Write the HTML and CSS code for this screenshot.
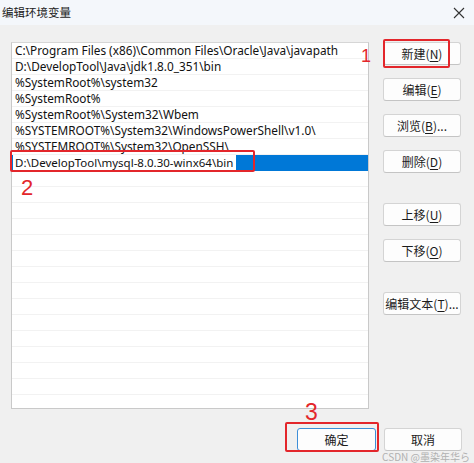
FILE: index.html
```html
<!DOCTYPE html>
<html>
<head>
<meta charset="utf-8">
<link rel="stylesheet" href="styles.css">
</head>
<body>
<div class="dialog">
  <div class="titlebar">
    <span class="title">编辑环境变量</span>
    <svg class="close" width="12" height="12" viewBox="0 0 12 12"><path d="M1 1L11 11M11 1L1 11" stroke="#333" stroke-width="1.1" fill="none"/></svg>
  </div>
  <div class="main">
    <div class="list">
      <div class="row">C:\Program Files (x86)\Common Files\Oracle\Java\javapath</div>
      <div class="row">D:\DevelopTool\Java\jdk1.8.0_351\bin</div>
      <div class="row">%SystemRoot%\system32</div>
      <div class="row">%SystemRoot%</div>
      <div class="row">%SystemRoot%\System32\Wbem</div>
      <div class="row">%SYSTEMROOT%\System32\WindowsPowerShell\v1.0\</div>
      <div class="row">%SYSTEMROOT%\System32\OpenSSH\</div>
      <div class="row selected"><span class="edit">D:\DevelopTool\mysql-8.0.30-winx64\bin</span></div>
      <div class="row"></div><div class="row"></div><div class="row"></div><div class="row"></div>
      <div class="row"></div><div class="row"></div><div class="row"></div><div class="row"></div>
      <div class="row"></div><div class="row"></div><div class="row"></div><div class="row"></div>
      <div class="row"></div><div class="row"></div><div class="row"></div>
    </div>
    <div class="side">
      <div class="group">
        <button class="btn">新建(<u>N</u>)</button>
        <button class="btn">编辑(<u>E</u>)</button>
        <button class="btn">浏览(<u>B</u>)...</button>
        <button class="btn">删除(<u>D</u>)</button>
      </div>
      <div class="group">
        <button class="btn">上移(<u>U</u>)</button>
        <button class="btn">下移(<u>O</u>)</button>
      </div>
      <div class="group">
        <button class="btn">编辑文本(<u>T</u>)...</button>
      </div>
    </div>
  </div>
  <div class="footer">
    <button class="btn default">确定</button>
    <button class="btn">取消</button>
  </div>
  <div class="mark box1"></div>
  <div class="mark box2"></div>
  <div class="mark box3"></div>
  <span class="num n1">1</span>
  <span class="num n2">2</span>
  <span class="num n3">3</span>
  <span class="watermark">CSDN @墨染年华ら</span>
</div>
</body>
</html>
```
FILE: styles.css
```css
html, body {
  margin: 0;
  padding: 0;
}
body {
  width: 474px;
  height: 463px;
  overflow: hidden;
  font-family: "Liberation Sans", "Noto Sans CJK SC", sans-serif;
}
.dialog {
  position: relative;
  width: 474px;
  height: 463px;
  background: #f0f0f0;
  display: flex;
  flex-direction: column;
}
.titlebar {
  height: 25px;
  background: #f4f7fb;
  display: flex;
  align-items: center;
  justify-content: space-between;
  padding: 0 9px 0 2px;
  box-sizing: border-box;
}
.title {
  font-family: "Noto Sans CJK SC", sans-serif;
  font-size: 11.5px;
  color: #222;
  margin-top: -1px;
}
.main {
  display: flex;
  padding: 17px 0 0 11px;
  gap: 14px;
}
.list {
  width: 358px;
  height: 367px;
  box-sizing: border-box;
  background: #fff;
  border: 1px solid #c9c9c9;
  border-top-color: #d6d6d6;
  overflow: hidden;
  display: flex;
  flex-direction: column;
}
.row {
  flex: none;
  height: 16px;
  box-sizing: border-box;
  border-bottom: 1px solid #f2f2f2;
  font-family: "Noto Sans", sans-serif;
  font-size: 11.8px;
  line-height: 15px;
  padding-left: 3px;
  color: #111;
  white-space: nowrap;
}
.row.selected {
  background: #0078d7;
  padding-left: 1px;
  border-bottom-color: #0078d7;
}
.edit {
  display: inline-block;
  background: #fff;
  height: 15px;
  padding: 0 3px 0 2px;
  font-size: 11.5px;
}
.side {
  width: 78px;
  display: flex;
  flex-direction: column;
  gap: 30px;
}
.group {
  display: flex;
  flex-direction: column;
  gap: 13px;
}
.btn {
  width: 78px;
  height: 23px;
  box-sizing: border-box;
  border: 1px solid #d4d4d4;
  border-bottom-color: #c4c4c4;
  border-radius: 3px;
  background: #fdfdfd;
  font-family: "Noto Sans CJK SC", sans-serif;
  font-size: 12px;
  color: #1b1b1b;
  padding: 0;
  line-height: 20px;
}
.btn u {
  text-decoration-thickness: 1px;
  text-underline-offset: 2px;
}
.footer {
  display: flex;
  justify-content: flex-end;
  gap: 8px;
  padding: 0 12px 0 0;
  margin-top: 19px;
}
.btn.default {
  border: 1px solid #3d8ed8;
  width: 79px;
}
.mark {
  position: absolute;
  border: 2px solid #e3262b;
  border-radius: 2px;
  box-sizing: border-box;
}
.box1 { left: 383px; top: 39px; width: 67px; height: 29px; }
.box2 { left: 10px; top: 150px; width: 245px; height: 22px; }
.box3 { left: 285px; top: 422px; width: 94px; height: 30px; }
.num {
  position: absolute;
  color: #e3262b;
  font-family: "Liberation Sans", sans-serif;
  line-height: 1;
}
.n1 { left: 361px; top: 47px; font-size: 18px; }
.n2 { left: 21px; top: 177px; font-size: 22px; }
.n3 { left: 305px; top: 401px; font-size: 23px; }
.watermark {
  position: absolute;
  right: 4px;
  bottom: 0px;
  font-family: "Noto Sans CJK SC", sans-serif;
  font-size: 10px;
  line-height: 12px;
  color: #b0b0b0;
}
```
